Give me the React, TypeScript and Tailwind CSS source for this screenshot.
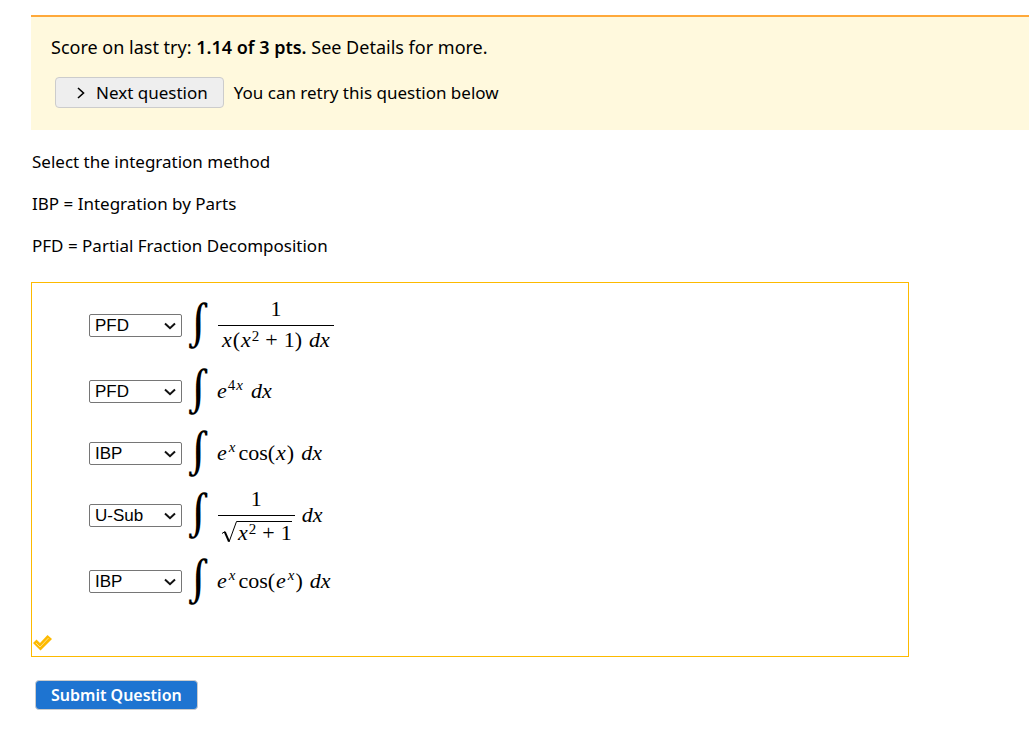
import type { ReactNode } from 'react'

const methods = ['IBP', 'PFD', 'U-Sub']

function Var({ children }: { children: ReactNode }) {
  return <i className="mx-px">{children}</i>
}

function Sup({ children, low }: { children: ReactNode; low?: boolean }) {
  return <sup className={`${low ? '-top-1.5' : '-top-2'} text-[15px] leading-none`}>{children}</sup>
}

function Fraction({ top, children }: { top: ReactNode; children: ReactNode }) {
  return (
    <span className="flex flex-col items-center ml-0.5">
      <span className="h-7 leading-6">{top}</span>
      <span className="flex justify-center w-full border-t border-black px-[3px] pt-1 h-7 leading-5 whitespace-nowrap">{children}</span>
    </span>
  )
}

function Root({ children }: { children: ReactNode }) {
  return (
    <span className="flex pt-px">
      <svg viewBox="0 0 16 22" className="w-4 h-[22px]" fill="none" stroke="#000">
        <path d="M1 12.5 4 10.5" />
        <path d="M3.8 10.8 8 20.5" strokeWidth="2" />
        <path d="M8 21 15.5 0.5H16" />
      </svg>
      <span className="border-t border-black pt-px">{children}</span>
    </span>
  )
}

const plus = <span className="mx-1.5">+</span>
const dx = <span className="ml-1.5"><Var>dx</Var></span>
const cos = <span className="ml-0.5">cos</span>

const questions = [
  {
    answer: 'PFD',
    tall: true,
    math: (
      <Fraction top="1">
        <span><Var>x</Var>(<Var>x</Var><Sup low>2</Sup>{plus}1){dx}</span>
      </Fraction>
    ),
  },
  { answer: 'PFD', tall: false, math: <span><Var>e</Var><Sup>4<Var>x</Var></Sup>{dx}</span> },
  { answer: 'IBP', tall: false, math: <span><Var>e</Var><Sup><Var>x</Var></Sup>{cos}(<Var>x</Var>){dx}</span> },
  {
    answer: 'U-Sub',
    tall: true,
    math: (
      <>
        <Fraction top="1">
          <Root><Var>x</Var><Sup low>2</Sup>{plus}1</Root>
        </Fraction>
        {dx}
      </>
    ),
  },
  {
    answer: 'IBP',
    tall: false,
    math: <span><Var>e</Var><Sup><Var>x</Var></Sup>{cos}(<Var>e</Var><Sup><Var>x</Var></Sup>){dx}</span>,
  },
]

function MethodSelect({ value, label }: { value: string; label: string }) {
  return (
    <div className="relative">
      <select
        aria-label={label}
        defaultValue={value}
        className="block appearance-none w-[93px] h-[23px] pl-[5px] pt-px border border-[#767676] rounded-xs bg-white text-black text-[17px] leading-5 font-['Liberation_Sans',sans-serif]"
      >
        {methods.map((m) => (
          <option key={m}>{m}</option>
        ))}
      </select>
      <svg viewBox="0 0 12 8" className="absolute right-1.5 top-2 w-3 h-2 pointer-events-none" fill="none" stroke="#111" strokeWidth="2">
        <path d="M1 1.5 6 6.2 11 1.5" />
      </svg>
    </div>
  )
}

export default function App() {
  return (
    <main className="pl-[31px] pt-[15px] pb-5 bg-white text-black text-[17px] leading-6 font-['Noto_Sans',sans-serif]">
      <section className="border-t-2 border-[#ffa93a] bg-[#fff9dd] pl-5 pt-[18px] pb-[22px]">
        <p className="text-[18px] leading-6">
          Score on last try: <strong className="font-semibold">1.14 of 3 pts.</strong> See Details for more.
        </p>
        <div className="flex items-center gap-2.5 mt-[18px] pl-1">
          <button type="button" className="flex items-center gap-2.5 h-[31px] pl-5 pr-[15px] rounded border border-[#ccc] bg-[#eee]">
            <svg viewBox="0 0 10 14" className="w-2.5 h-3.5" fill="none" stroke="#000" strokeWidth="1.6">
              <path d="M2 2 7.5 7 2 12" />
            </svg>
            Next question
          </button>
          <span>You can retry this question below</span>
        </div>
      </section>

      <div className="mt-5 space-y-[18px] pl-px">
        <p>Select the integration method</p>
        <p>IBP = Integration by Parts</p>
        <p>PFD = Partial Fraction Decomposition</p>
      </div>

      <form>
        <div className="mt-6 mr-[120px] border border-[#fdba00] pt-[11px]">
          <ul className="pl-[57px]">
            {questions.map((q, i) => (
              <li key={i} className={q.tall ? 'pb-1' : ''}>
                <div className="flex items-center h-[62px]">
                  <MethodSelect value={q.answer} label={`Method for integral ${i + 1}`} />
                  <div className="flex items-center pl-1 text-[22px] leading-6 font-['Liberation_Serif',serif]">
                    <span className="w-[30px] text-[42px] leading-[48px] font-['DejaVu_Math_TeX_Gyre','Liberation_Serif',serif]">∫</span>
                    {q.math}
                  </div>
                </div>
              </li>
            ))}
          </ul>
          <div className="pt-[22px] pb-[5px] pl-px">
            <svg viewBox="0 0 19 17" className="block w-[19px] h-[17px]">
              <path d="M0 9 3.5 5.5 7 9 14.5 1 19 5 7.5 16.5Z" fill="#fdba00" />
              <path d="M3 9 7 13 15.5 4" fill="none" stroke="#ffe08a" />
            </svg>
          </div>
        </div>
        <button type="button" className="block mt-[23px] ml-1 h-[30px] px-[15px] rounded border border-[#ccc] bg-[#1e74d1] text-white text-base font-semibold">
          Submit Question
        </button>
      </form>
    </main>
  )
}
